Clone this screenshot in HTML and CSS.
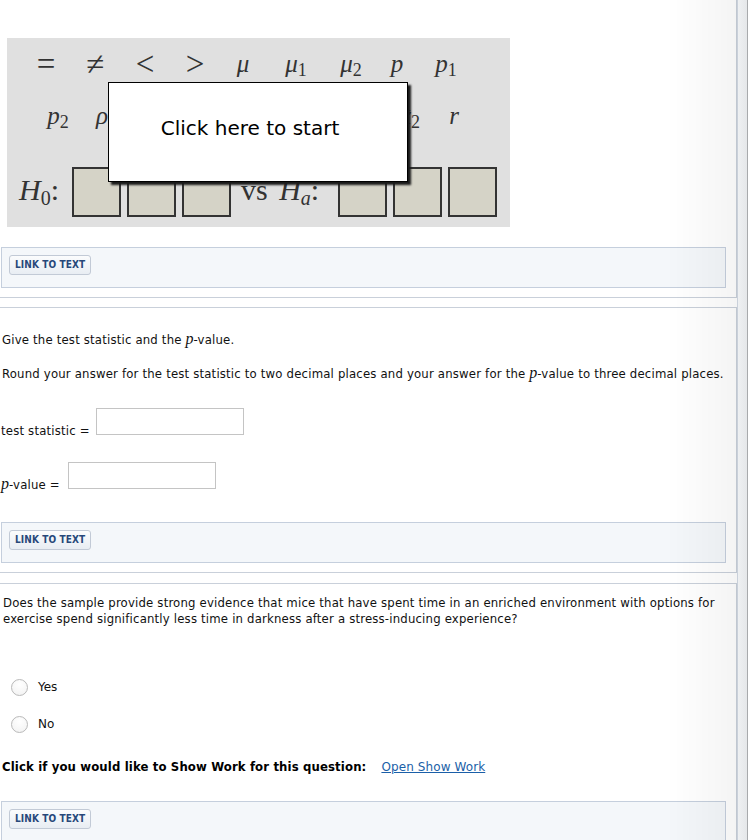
FILE: index.html
```html
<!DOCTYPE html>
<html>
<head>
<meta charset="utf-8">
<link rel="stylesheet" href="styles.css">
</head>
<body>
<div class="page">
  <div class="main">
    <section class="part part-first">
      <div class="hyp">
        <div class="sym-row row1">
          <span class="sym op s1">=</span>
          <span class="sym op s2">≠</span>
          <span class="sym op s3">&lt;</span>
          <span class="sym op s4">&gt;</span>
          <span class="sym s5"><i>μ</i></span>
          <span class="sym s6"><i>μ</i><sub>1</sub></span>
          <span class="sym s7"><i>μ</i><sub>2</sub></span>
          <span class="sym s8"><i>p</i></span>
          <span class="sym s9"><i>p</i><sub>1</sub></span>
        </div>
        <div class="sym-row row2">
          <span class="sym t1"><i>p</i><sub>2</sub></span>
          <span class="sym t2"><i>ρ</i></span>
          <span class="sym t5"><i>x̄</i><sub>2</sub></span>
          <span class="sym t8"><i>r</i></span>
        </div>
        <div class="hyp-row">
          <span class="hlabel"><i>H</i><sub>0</sub>:</span>
          <span class="slot"></span><span class="slot"></span><span class="slot"></span>
          <span class="hvs">vs <i>H</i><sub><i>a</i></sub>:</span>
          <span class="slot"></span><span class="slot"></span><span class="slot"></span>
        </div>
        <div class="popup">Click here to start</div>
      </div>
      <div class="linkbox"><span class="linkbtn">LINK TO TEXT</span></div>
    </section>

    <section class="part part-two">
      <p class="q">Give the test statistic and the <i class="mi">p</i>-value.</p>
      <p class="q q2">Round your answer for the test statistic to two decimal places and your answer for the <i class="mi">p</i>-value to three decimal places.</p>
      <div class="field f1"><span class="flabel">test statistic =</span><span class="inp"></span></div>
      <div class="field f2"><span class="flabel"><i class="mi">p</i>-value =</span><span class="inp"></span></div>
      <div class="linkbox lb2"><span class="linkbtn">LINK TO TEXT</span></div>
    </section>

    <section class="part part-three">
      <p class="q q3">Does the sample provide strong evidence that mice that have spent time in an enriched environment with options for exercise spend significantly less time in darkness after a stress-inducing experience?</p>
      <div class="opts">
        <label class="opt"><span class="radio"></span>Yes</label>
        <label class="opt"><span class="radio"></span>No</label>
      </div>
      <div class="showwork"><b>Click if you would like to Show Work for this question:</b><a class="swlink">Open Show Work</a></div>
      <div class="linkbox lb3"><span class="linkbtn">LINK TO TEXT</span></div>
    </section>
  </div>
  <div class="rail"></div>
</div>
<div class="edge-shade"></div>
</body>
</html>
```
FILE: styles.css
```css
html, body {
  margin: 0;
  padding: 0;
  background: #fff;
  overflow: hidden;
}
body {
  font-family: "DejaVu Sans Condensed", "DejaVu Sans", sans-serif;
  font-size: 13px;
  letter-spacing: 0.185px;
  color: #111;
}
.page {
  display: flex;
  width: 748px;
  height: 840px;
}
.main {
  width: 737px;
  flex: none;
}
.rail {
  flex: none;
  width: 10px;
  border-left: 1px solid #c9d0da;
  background: linear-gradient(to right, #eef0f2, #e4e6e8);
  box-shadow: inset -1px 0 0 #a8aaac;
}
.edge-shade {
  position: fixed;
  top: 0;
  right: 11px;
  width: 70px;
  height: 840px;
  background: linear-gradient(to right, rgba(0,0,0,0), rgba(0,0,0,0.045));
  pointer-events: none;
}
.part {
  border: 1px solid #c9d0da;
  border-left: 0;
  padding: 0 10px 9px 1px;
  background: #fff;
}
.part-first {
  border-top: 0;
  padding-top: 38px;
  padding-bottom: 9px;
}
.part-two {
  margin-top: 9px;
  padding-top: 23px;
}
.part-three {
  margin-top: 10px;
  padding-top: 11px;
}

/* hypothesis builder */
.hyp {
  position: relative;
  margin-left: 6px;
  width: 503px;
  height: 189px;
  background: #e0e0e0;
  font-family: "Liberation Serif", "DejaVu Serif", serif;
  letter-spacing: 0;
  color: #333;
}
.sym-row {
  display: flex;
  align-items: center;
  font-size: 25px;
}
.row1 { height: 51px; }
.row2 { height: 54px; }
.sym {
  display: block;
  flex: none;
  width: 40px;
  text-align: center;
  line-height: 30px;
}
.op { font-size: 33px; }
.sym sub { font-size: 18px; vertical-align: -4px; font-style: normal; line-height: 0; }
.s1 { margin-left: 19px; }
.s2 { margin-left: 9px; }
.s3 { margin-left: 10px; }
.s4 { margin-left: 10px; }
.s5 { margin-left: 8px; }
.s6 { margin-left: 13px; }
.s7 { margin-left: 15px; }
.s8 { margin-left: 6px; }
.s9 { margin-left: 9px; }
.t1 { margin-left: 31px; }
.t2 { margin-left: 4px; }
.t5 { margin-left: 268px; }
.t8 { margin-left: 4px; }
.hyp-row {
  display: flex;
  align-items: flex-end;
  height: 84px;
  font-size: 30px;
  padding-left: 12px;
}
.hyp-row sub { font-size: 20px; vertical-align: -5px; line-height: 0; }
.hlabel { width: 53px; flex: none; margin-bottom: 22px; line-height: 30px; }
.hvs { width: 97px; flex: none; margin: 0 0 22px 4px; font-size: 30px; line-height: 30px; word-spacing: 4px; }
.slot {
  flex: none;
  width: 45px;
  height: 46px;
  border: 2px solid #333;
  background: #d5d3c7;
  margin-right: 6px;
  margin-bottom: 10px;
}
.popup {
  position: absolute;
  left: 101px;
  top: 44px;
  box-sizing: border-box;
  width: 300px;
  height: 100px;
  background: #fff;
  border: 1px solid #000;
  box-shadow: 3px 3px 2px #1a1a1a;
  display: flex;
  align-items: center;
  justify-content: center;
  font-family: "DejaVu Sans", sans-serif;
  font-size: 20px;
  letter-spacing: 0;
  color: #000;
  padding: 0 16px 8px 0;
}

/* link to text */
.linkbox {
  margin-top: 20px;
  border: 1px solid #c5cfdd;
  background: #f4f7fa;
  padding: 7px 0 0 7px;
  box-sizing: border-box;
  height: 41px;
}
.linkbtn {
  display: inline-block;
  height: 18px;
  line-height: 18px;
  padding: 0 5px;
  border: 1px solid #c2cad6;
  border-radius: 3px;
  background: linear-gradient(#fbfcfd, #e8edf3);
  font-family: "DejaVu Sans Condensed", "DejaVu Sans", sans-serif;
  font-weight: bold;
  font-size: 10px;
  color: #27487a;
  letter-spacing: 0.1px;
}
.lb2 { margin-top: 33px; }
.lb3 { margin-top: 26px; }

/* part two */
.q {
  margin: 0;
  line-height: 16px;
  padding-left: 1px;
}
.q2 { margin-top: 17px; }
.mi {
  font-family: "Liberation Serif", serif;
  font-size: 16px;
  letter-spacing: 0;
}
.field {
  height: 27px;
  line-height: 16px;
}
.f1 { margin-top: 26px; }
.f2 { margin-top: 27px; }
.flabel { margin-right: 6px; }
.f2 .flabel { margin-right: 8px; }
.inp {
  display: inline-block;
  vertical-align: baseline;
  width: 146px;
  height: 25px;
  border: 1px solid #c4c4c4;
  background: #fff;
}

/* part three */
.q3 { padding-left: 2px; }
.opts {
  margin-top: 51px;
  padding-left: 10px;
}
.opt {
  display: flex;
  align-items: center;
  height: 18px;
  margin-bottom: 19px;
  font-family: "DejaVu Sans", sans-serif;
  font-size: 12px;
  letter-spacing: 0;
}
.radio {
  display: block;
  width: 15px;
  height: 15px;
  border: 1px solid #b9b9b9;
  border-radius: 50%;
  background: radial-gradient(circle at 50% 30%, #fff, #f1f1f1);
  margin-right: 10px;
}
.showwork {
  margin-top: 26px;
  padding-left: 1px;
  font-family: "DejaVu Sans Condensed", "DejaVu Sans", sans-serif;
  font-size: 13px;
  line-height: 16px;
  letter-spacing: 0.13px;
}
.showwork b { color: #000; }
.swlink {
  margin-left: 15px;
  color: #1b5fa8;
  text-decoration: underline;
  font-family: "DejaVu Sans", sans-serif;
  font-size: 12px;
  letter-spacing: 0.1px;
}
```
